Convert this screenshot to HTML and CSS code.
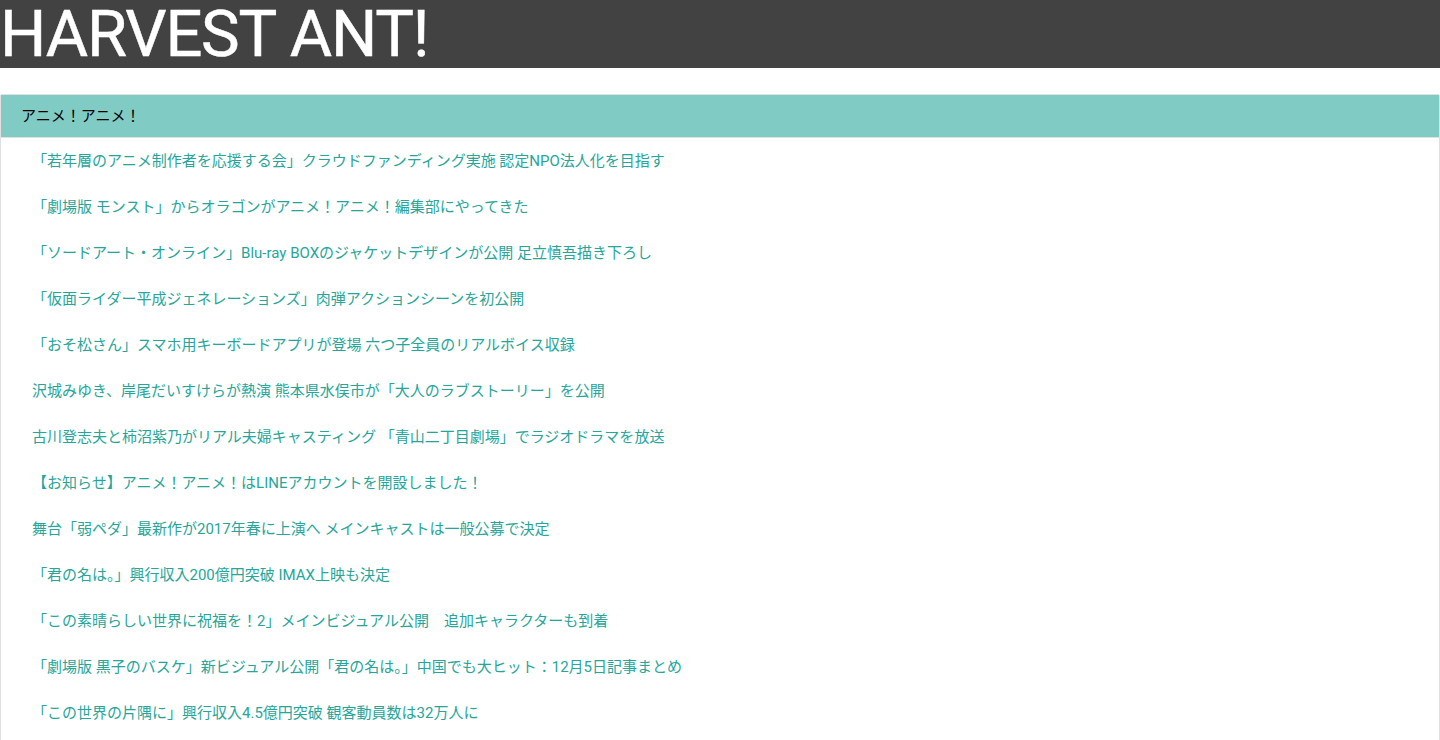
FILE: index.html
```html
<!DOCTYPE html>
<html lang="ja">
<head>
<meta charset="utf-8">
<title>HARVEST ANT!</title>
<link rel="stylesheet" href="styles.css">
</head>
<body>
<header class="site-header">
  <h1 class="site-title">HARVEST ANT!</h1>
</header>
<main class="content">
  <ul class="collection">
    <li class="collection-header">アニメ！アニメ！</li>
    <li class="collection-item"><a href="#">「若年層のアニメ制作者を応援する会」クラウドファンディング実施 認定NPO法人化を目指す</a></li>
    <li class="collection-item"><a href="#">「劇場版 モンスト」からオラゴンがアニメ！アニメ！編集部にやってきた</a></li>
    <li class="collection-item"><a href="#">「ソードアート・オンライン」Blu-ray BOXのジャケットデザインが公開 足立慎吾描き下ろし</a></li>
    <li class="collection-item"><a href="#">「仮面ライダー平成ジェネレーションズ」肉弾アクションシーンを初公開</a></li>
    <li class="collection-item"><a href="#">「おそ松さん」スマホ用キーボードアプリが登場 六つ子全員のリアルボイス収録</a></li>
    <li class="collection-item"><a href="#">沢城みゆき、岸尾だいすけらが熱演 熊本県水俣市が「大人のラブストーリー」を公開</a></li>
    <li class="collection-item"><a href="#">古川登志夫と柿沼紫乃がリアル夫婦キャスティング 「青山二丁目劇場」でラジオドラマを放送</a></li>
    <li class="collection-item"><a href="#">【お知らせ】アニメ！アニメ！はLINEアカウントを開設しました！</a></li>
    <li class="collection-item"><a href="#">舞台「弱ペダ」最新作が2017年春に上演へ メインキャストは一般公募で決定</a></li>
    <li class="collection-item"><a href="#">「君の名は。」興行収入200億円突破 IMAX上映も決定</a></li>
    <li class="collection-item"><a href="#">「この素晴らしい世界に祝福を！2」メインビジュアル公開　追加キャラクターも到着</a></li>
    <li class="collection-item"><a href="#">「劇場版 黒子のバスケ」新ビジュアル公開「君の名は。」中国でも大ヒット：12月5日記事まとめ</a></li>
    <li class="collection-item"><a href="#">「この世界の片隅に」興行収入4.5億円突破 観客動員数は32万人に</a></li>
    <li class="collection-item"><a href="#">「ガールズ＆パンツァー 劇場版」4DX上映決定</a></li>
  </ul>
</main>
</body>
</html>
```

FILE: styles.css
```css
html, body {
  margin: 0;
  padding: 0;
}
body {
  font-family: Roboto, "Noto Sans CJK JP", sans-serif;
  font-size: 15px;
  color: rgba(0, 0, 0, 0.87);
  background: #fff;
}
.site-header {
  background: #424242;
  height: 68px;
}
.site-title {
  margin: 0;
  font-family: Roboto, sans-serif;
  font-weight: 400;
  font-size: 65px;
  line-height: 68px;
  color: #fff;
  letter-spacing: -1.2px;
  -webkit-text-stroke: 0.5px #fff;
}
.content {
  padding-top: 26px;
}
.collection {
  list-style: none;
  margin: 0;
  padding: 0;
  border: 1px solid #e0e0e0;
  border-radius: 2px;
}
.collection-header {
  background: #80cbc4;
  padding: 10px 20px;
  line-height: 22px;
  border-bottom: 1px solid #e0e0e0;
  color: #000;
  font-size: 15px;
}
.collection-item {
  padding: 12px 31px;
  line-height: 22px;
}
.collection-item:first-of-type {
  padding-top: 13px;
}
.collection-item a {
  color: #26a69a;
  text-decoration: none;
  font-size: 15px;
}
```
